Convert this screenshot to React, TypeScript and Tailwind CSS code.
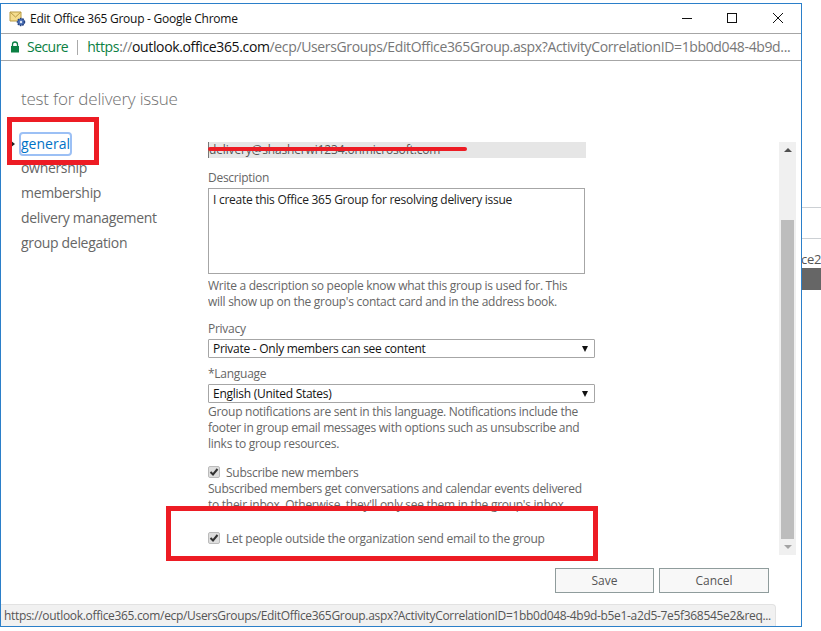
export default function App() {
  const nav = ["ownership", "membership", "delivery management", "group delegation"];
  return (
    <div className="flex h-[631px] w-[821px] overflow-hidden bg-white font-['Open_Sans',sans-serif] text-[12px] leading-[16px] tracking-[-0.27px] text-[#666]">
      <div className="relative mt-[3px] flex h-[624px] w-[802px] flex-col border border-[#2b7fc9] bg-white">
        <div className="flex h-[30px] items-center border-b border-[#a6a6a6] pl-[8px]">
          <svg width="18" height="16" viewBox="0 0 18 16">
            <path d="M1 1h11v9H1z" fill="#f5dd8e" stroke="#b89b45" strokeWidth="1" />
            <path d="M1 1l5.500 5L12 1" fill="none" stroke="#b89b45" strokeWidth="1" />
            <circle cx="12" cy="11" r="3.500" fill="#4a6fb5" stroke="#23407e" strokeWidth="1.500" strokeDasharray="1.500 1" />
            <circle cx="12" cy="11" r="1.200" fill="#dfe7f5" />
          </svg>
          <span className="ml-[3px] text-[12px] tracking-[-0.26px] text-[#111]">Edit Office 365 Group - Google Chrome</span>
          <div className="ml-auto flex items-center pb-[2px] pr-[17px]">
            <svg width="12" height="12" viewBox="0 0 12 12" className="mr-[33px]"><path d="M1 6.500h10" stroke="#111" strokeWidth="1" /></svg>
            <svg width="12" height="12" viewBox="0 0 12 12" className="mr-[34px]"><rect x="1.500" y="1.500" width="9" height="9" fill="none" stroke="#111" strokeWidth="1" /></svg>
            <svg width="12" height="12" viewBox="0 0 12 12"><path d="M1 1l10 10M11 1L1 11" stroke="#111" strokeWidth="1" /></svg>
          </div>
        </div>
        <div className="flex h-[27px] items-center border-b border-[#a6a6a6] pl-[9px] text-[14px] tracking-[-0.36px]">
          <svg width="10" height="12" viewBox="0 0 10 12">
            <path d="M2.500 5V3.500a2.500 2.500 0 0 1 5 0V5" fill="none" stroke="#0b8043" strokeWidth="1.300" />
            <rect x="1" y="5" width="8" height="6.500" fill="#0b8043" />
          </svg>
          <span className="ml-[7px] tracking-[-0.55px] text-[#0b8043]">Secure</span>
          <span className="mx-[9px] h-[15px] w-px bg-[#aaa]" />
          <span className="whitespace-nowrap text-[#777]">
            <span className="text-[#0b8043]">https</span>://<span className="text-[#111]">outlook.office365.com</span>/ecp/UsersGroups/EditOffice365Group.aspx?ActivityCorrelationID=1bb0d048-4b9d...
          </span>
        </div>
        <div className="flex flex-1 flex-col">
          <h1 className="ml-[20px] mt-[27px] text-[17px] font-light leading-[22px] tracking-[-0.2px] text-[#707070]">test for delivery issue</h1>
          <div className="mt-[21px] flex">
            <nav className="relative w-[207px] pl-[20px] text-[14px] leading-[25px] tracking-[-0.32px]">
              <div className="absolute left-[9px] top-[9px] h-0 w-0 border-y-[4px] border-l-[5px] border-y-transparent border-l-[#222]" />
              <div className="flex h-[25px] items-center"><span className="rounded-[2px] leading-[20px] tracking-[0px] text-[#0072c6] outline outline-2 outline-[#9cc0f5]">general</span></div>
              <div className="-mt-[1px]">
                {nav.map((n) => <div key={n} className="h-[25px]">{n}</div>)}
              </div>
            </nav>
            <div className="mt-[11px] h-[413px] w-[387px] overflow-hidden">
              <div className="flex h-[16px] w-[378px] items-center overflow-hidden border-l border-[#777] bg-[#e6e6e6] text-[#555] tracking-[-0.15px]"><span className="-mt-[1px]">delivery@shasherwi1234.onmicrosoft.com</span></div>
              <div className="mt-[12px]">Description</div>
              <div className="mt-[2px] h-[86px] w-[377px] border border-[#a6a6a6] px-[4px] py-[3px] text-[#222]">I create this Office 365 Group for resolving delivery issue</div>
              <p className="mt-[4px] w-[378px]">Write a description so people know what this group is used for. This will show up on the group's contact card and in the address book.</p>
              <div className="mt-[11px]">Privacy</div>
              <div className="mt-[2px] flex h-[19px] w-[387px] items-center justify-between rounded-[1px] border border-[#a6a6a6] pl-[4px] pr-[6px] text-[#111]"><span className="pt-[1px]">Private - Only members can see content</span><span className="h-0 w-0 border-x-[3.500px] border-t-[6px] border-x-transparent border-t-[#111]" /></div>
              <div className="mt-[8px]">*Language</div>
              <div className="mt-[2px] flex h-[19px] w-[387px] items-center justify-between rounded-[1px] border border-[#a6a6a6] pl-[4px] pr-[6px] text-[#111]"><span className="pt-[1px]">English (United States)</span><span className="h-0 w-0 border-x-[3.500px] border-t-[6px] border-x-transparent border-t-[#111]" /></div>
              <p className="mt-[1px] w-[378px]">Group notifications are sent in this language. Notifications include the footer in group email messages with options such as unsubscribe and links to group resources.</p>
              <Check className="mt-[12px]">Subscribe new members</Check>
              <p className="mt-[1px] w-[378px]">Subscribed members get conversations and calendar events delivered to their inbox. Otherwise, they'll only see them in the group's inbox.</p>
              <Check className="mt-[17px]">Let people outside the organization send email to the group</Check>
            </div>
            <div className="ml-[184px] mt-[11px] flex h-[413px] w-[17px] flex-col items-center self-start bg-[#f0f0f0]">
              <div className="mt-[6px] h-0 w-0 border-x-[4px] border-b-[4px] border-x-transparent border-b-[#505050]" />
              <div className="mt-[68px] h-[319px] w-[13px] bg-[#bdbdbd]" />
              <div className="mt-[6px] h-0 w-0 border-x-[4px] border-t-[4px] border-x-transparent border-t-[#a3a3a3]" />
            </div>
          </div>
          <div className="mt-[13px] flex justify-end gap-[5px] pr-[32px]">
            <button className="h-[25px] w-[99px] border border-[#8f9c9c] bg-[#f8f8f8] pt-[1px] text-[12px] tracking-normal text-[#555]">Save</button>
            <button className="h-[25px] w-[110px] border border-[#8f9c9c] bg-[#f8f8f8] pt-[1px] text-[12px] tracking-normal text-[#555]">Cancel</button>
          </div>
        </div>
        <div className="absolute bottom-0 left-0 flex h-[22px] w-[775px] items-center rounded-tr-[4px] border-t border-r border-[#e2e2e2] bg-[#f1f1f1] pl-[3px] tracking-[-0.32px] text-[#555]">
          <span className="whitespace-nowrap">https://outlook.office365.com/ecp/UsersGroups/EditOffice365Group.aspx?ActivityCorrelationID=1bb0d048-4b9d-b5e1-a2d5-7e5f368545e2&amp;req...</span>
        </div>
        <div className="absolute left-[6px] top-[113px] h-[48px] w-[92px] border-[5px] border-[#ed1c24]" />
        <div className="absolute left-[207px] top-[143px] h-[4px] w-[259px] rounded-full bg-[#ed1c24]" />
        <div className="absolute left-[165px] top-[502px] h-[55px] w-[432px] border-[5px] border-[#ed1c24]" />
      </div>
      <div className="flex-1 overflow-hidden">
        <div className="mt-[207px] h-[32px] border-y border-[#ccd0d4]" />
        <div className="mt-[11px] -ml-[1px] whitespace-nowrap text-[13px] leading-[18px] text-[#555]">ce2c</div>
        <div className="h-[22px] bg-[#666]" />
      </div>
    </div>
  );
}

function Check({ children, className }: { children: string; className: string }) {
  return (
    <div className={`flex h-[16px] items-center ${className}`}>
      <span className="flex h-[12px] w-[12px] items-center justify-center rounded-[2px] border border-[#bbb] bg-[#dedede]">
        <svg width="10" height="10" viewBox="0 0 10 10"><path d="M1.500 5l2.500 2.500L8.500 2" fill="none" stroke="#333" strokeWidth="2" /></svg>
      </span>
      <span className="ml-[6px] pt-[1px]">{children}</span>
    </div>
  );
}
